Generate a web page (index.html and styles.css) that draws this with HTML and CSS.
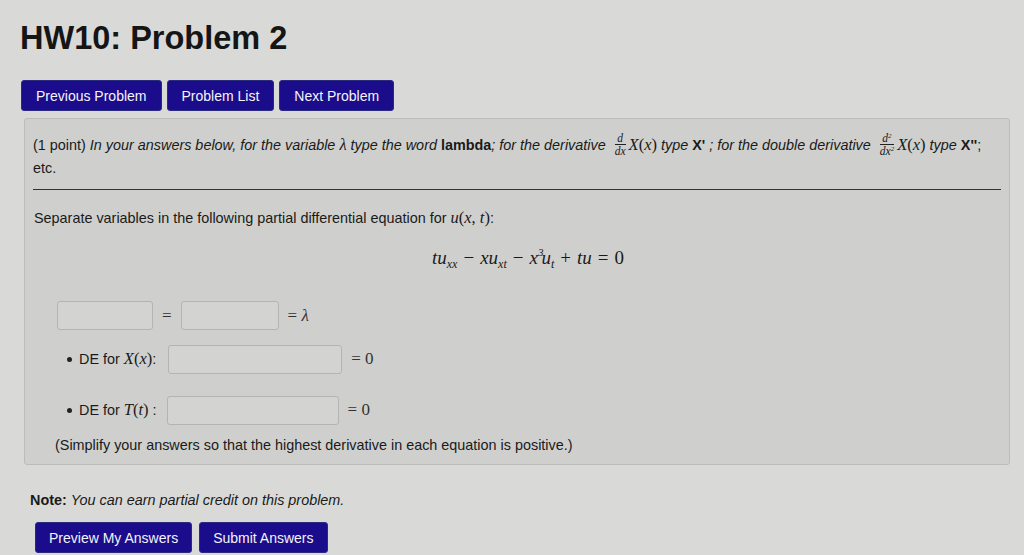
FILE: index.html
```html
<!DOCTYPE html>
<html>
<head>
<meta charset="utf-8">
<link rel="stylesheet" href="styles.css">
</head>
<body>
<div class="page">
  <h1 class="title">HW10: Problem 2</h1>
  <div class="nav">
    <a class="btn">Previous Problem</a>
    <a class="btn">Problem List</a>
    <a class="btn">Next Problem</a>
  </div>
  <div class="panel">
    <p class="intro">(1 point) <i>In your answers below, for the variable <span class="m">λ</span> type the word </i><b>lambda</b><i>; for the derivative <span class="frac"><span class="num">d</span><span class="den">dx</span></span><span class="m">X</span><span class="mr">(</span><span class="m">x</span><span class="mr">)</span> type </i><b>X'</b><i> ; for the double derivative <span class="frac"><span class="num">d<sup>2</sup></span><span class="den">dx<sup>2</sup></span></span><span class="m">X</span><span class="mr">(</span><span class="m">x</span><span class="mr">)</span> type </i><b>X''</b>;<br>etc.</p>
    <hr class="rule">
    <p class="lead">Separate variables in the following partial differential equation for <span class="m">u</span><span class="mr">(</span><span class="m">x</span><span class="mr">, </span><span class="m">t</span><span class="mr">)</span>:</p>
    <div class="eq"><span class="m">tu<sub>xx</sub></span><span class="mr op">−</span><span class="m">xu<sub>xt</sub></span><span class="mr op">−</span><span class="m">x<sup>3</sup>u<sub>t</sub></span><span class="mr op">+</span><span class="m">tu</span><span class="mr op">=</span><span class="mr">0</span></div>
    <div class="sep-row">
      <span class="box w96"></span>
      <span class="mr eqs">=</span>
      <span class="box w98"></span>
      <span class="mr eqs">= <span class="m">λ</span></span>
    </div>
    <ul class="des">
      <li class="de-x"><span class="lbl">DE for <span class="m">X</span><span class="mr">(</span><span class="m">x</span><span class="mr">)</span>:</span><span class="box w174"></span><span class="mr eqs">= 0</span></li>
      <li class="de-t"><span class="lbl">DE for <span class="m">T</span><span class="mr">(</span><span class="m">t</span><span class="mr">)</span> :</span><span class="box w172"></span><span class="mr eqs">= 0</span></li>
    </ul>
    <p class="simplify">(Simplify your answers so that the highest derivative in each equation is positive.)</p>
  </div>
  <p class="note"><b>Note:</b> <i>You can earn partial credit on this problem.</i></p>
  <div class="actions">
    <a class="btn btn-lg">Preview My Answers</a>
    <a class="btn btn-lg">Submit Answers</a>
  </div>
</div>
</body>
</html>
```
FILE: styles.css
```css
html, body {
  margin: 0;
  padding: 0;
  background: #d9dad7;
  color: #1a1a1a;
  font-family: "Liberation Sans", Arial, sans-serif;
  font-size: 14.4px;
  overflow: hidden;
}
.page {
  padding: 20px 0 0 20px;
  height: 535px;
}
.title {
  margin: 0;
  font-size: 32.5px;
  line-height: 37px;
  font-weight: bold;
  color: #151515;
}
.nav {
  display: flex;
  gap: 5px;
  margin-top: 23px;
  margin-left: 1px;
}
.btn {
  display: inline-flex;
  align-items: center;
  height: 31px;
  padding: 0 14px;
  box-sizing: border-box;
  background: #1b0c8c;
  color: #f4f4f8;
  font-size: 14px;
  border-radius: 3px;
  border: 1px solid #2a2a80;
}
.panel {
  margin: 7px 0 0 4px;
  width: 986px;
  height: 347px;
  box-sizing: border-box;
  border: 1px solid #bcbdba;
  border-radius: 3px;
  background: #cfd0cd;
  padding: 14px 8px 0 8px;
}
.intro {
  margin: 0;
  line-height: 23px;
}
.m {
  font-family: "Liberation Serif", "Times New Roman", serif;
  font-style: italic;
  font-size: 16.5px;
}
.mr {
  font-family: "Liberation Serif", "Times New Roman", serif;
  font-style: normal;
  font-size: 16.5px;
}
.m .m, .mr .m { font-size: inherit; }
.frac {
  display: inline-block;
  vertical-align: -5px;
  text-align: center;
  font-family: "Liberation Serif", serif;
  font-style: italic;
  font-size: 11.5px;
  line-height: 10px;
  margin: 0 3px 0 5px;
}
.frac .num {
  display: block;
  border-bottom: 1px solid #222;
  padding: 0 2px 1px;
}
.frac .den {
  display: block;
  padding-top: 1px;
}
.frac sup { font-size: 7px; vertical-align: 4px; line-height: 0; }
.rule {
  margin: 9px 0 0 0;
  border: 0;
  border-top: 1px solid #333;
  width: 968px;
}
.lead {
  margin: 18px 0 0 1px;
}
.eq {
  margin: 20px 0 0 399px;
  line-height: 20px;
}
.eq .m, .eq .mr { font-size: 19px; }
.eq .op { margin: 0 6px; }
.eq sub { font-size: 12px; vertical-align: -4px; line-height: 0; }
.eq sup { font-size: 11px; vertical-align: 8px; margin-right: -2px; line-height: 0; }
.sep-row {
  display: flex;
  align-items: center;
  margin: 32px 0 0 24px;
  height: 29px;
}
.box {
  display: inline-block;
  height: 29px;
  box-sizing: border-box;
  border: 1px solid #b4b5b2;
  border-radius: 3px;
  background: #d3d4d1;
}
.w96 { width: 96px; }
.w98 { width: 98px; }
.w174 { width: 174px; }
.w172 { width: 172px; }
.eqs {
  margin: 0 9px 0 9px;
  color: #333;
  font-size: 17px;
}
.des {
  margin: 14px 0 0 0;
  padding: 0 0 0 46px;
}
.des li {
  display: flex;
  align-items: center;
  height: 30px;
  position: relative;
}
.des li::before {
  content: "";
  position: absolute;
  left: -12px;
  top: 13px;
  width: 5px;
  height: 5px;
  border-radius: 50%;
  background: #222;
}
.de-t { margin-top: 21px; }
.de-x .lbl { margin-right: 12px; }
.de-t .lbl { margin-right: 10px; }
.simplify {
  margin: 12px 0 0 22px;
}
.note {
  margin: 27px 0 0 10px;
}
.actions {
  display: flex;
  gap: 7px;
  margin: 14px 0 0 15px;
}
.btn-lg { height: 31px; padding: 0 13px; }
```
